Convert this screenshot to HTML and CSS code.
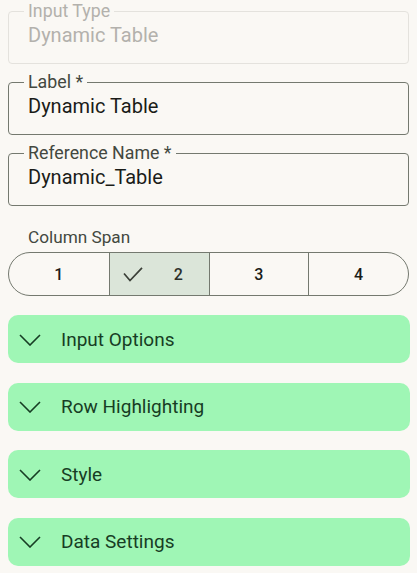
FILE: index.html
```html
<!DOCTYPE html>
<html lang="en">
<head>
<meta charset="utf-8">
<title>Dynamic Table</title>
<link rel="stylesheet" href="styles.css">
</head>
<body>
<div class="page">
  <fieldset class="field field-disabled">
    <legend class="field-label">Input Type</legend>
    <div class="field-value">Dynamic Table</div>
  </fieldset>
  <fieldset class="field">
    <legend class="field-label">Label *</legend>
    <div class="field-value">Dynamic Table</div>
  </fieldset>
  <fieldset class="field">
    <legend class="field-label">Reference Name *</legend>
    <div class="field-value">Dynamic_Table</div>
  </fieldset>

  <div class="span-label">Column Span</div>
  <div class="segmented">
    <div class="segment">1</div>
    <div class="segment segment-selected">
      <svg class="check" width="20" height="16" viewBox="0 0 20 16"><polyline points="1,6.5 7,13.5 19,0.8" fill="none" stroke="#3c4039" stroke-width="1.7"/></svg>
      <span>2</span>
    </div>
    <div class="segment">3</div>
    <div class="segment">4</div>
  </div>

  <div class="panels">
    <div class="panel">
      <svg class="chev" width="22" height="12" viewBox="0 0 22 12"><polyline points="1,1 11,11 21,1" fill="none" stroke="#173d24" stroke-width="1.6"/></svg>
      <span>Input Options</span>
    </div>
    <div class="panel">
      <svg class="chev" width="22" height="12" viewBox="0 0 22 12"><polyline points="1,1 11,11 21,1" fill="none" stroke="#173d24" stroke-width="1.6"/></svg>
      <span>Row Highlighting</span>
    </div>
    <div class="panel">
      <svg class="chev" width="22" height="12" viewBox="0 0 22 12"><polyline points="1,1 11,11 21,1" fill="none" stroke="#173d24" stroke-width="1.6"/></svg>
      <span>Style</span>
    </div>
    <div class="panel">
      <svg class="chev" width="22" height="12" viewBox="0 0 22 12"><polyline points="1,1 11,11 21,1" fill="none" stroke="#173d24" stroke-width="1.6"/></svg>
      <span>Data Settings</span>
    </div>
  </div>
</div>
</body>
</html>
```

FILE: styles.css
```css
html, body {
  margin: 0;
  padding: 0;
  background: #faf8f4;
}

body {
  font-family: Roboto, "Noto Sans", sans-serif;
  color: #1a1c18;
}

.page {
  width: 417px;
  height: 573px;
  box-sizing: border-box;
  padding: 0 8px;
  overflow: hidden;
}

.field {
  margin: 0 0 7px 0;
  border: 1px solid #74796f;
  border-radius: 4px;
  padding: 0 15px 15px 15px;
  min-width: 0;
}

.field-label {
  padding: 0 4px;
  font-size: 17.8px;
  line-height: 22px;
  color: #43483f;
}

.field-value {
  padding: 0 4px;
  font-size: 20px;
  line-height: 26px;
  color: #1a1c18;
}

.field-disabled {
  border-color: #e4e2dd;
}

.field-disabled .field-label,
.field-disabled .field-value {
  color: #b3b1ac;
}

.span-label {
  margin-top: 21px;
  padding-left: 20px;
  font-size: 17.2px;
  line-height: 20px;
  color: #43483f;
}

.segmented {
  margin-top: 5px;
  display: grid;
  grid-template-columns: repeat(4, 1fr);
  height: 44px;
  box-sizing: border-box;
  border: 1px solid #74796f;
  border-radius: 22px;
  overflow: hidden;
}

.segment {
  display: flex;
  align-items: center;
  justify-content: center;
  font-size: 16px;
  font-weight: 500;
  color: #1a1c18;
  border-left: 1px solid #74796f;
}

.segment:first-child {
  border-left: none;
}

.segment-selected {
  background: #dbe5d9;
  justify-content: flex-start;
  padding-left: 13px;
  color: #2c2f2a;
}

.check {
  margin-right: 31px;
  margin-top: 2px;
}

.panels {
  margin-top: 19px;
  display: flex;
  flex-direction: column;
  gap: 19.5px;
  margin-right: -1px;
}

.panel {
  height: 48px;
  border-radius: 10px;
  background: #9ff6b5;
  display: flex;
  align-items: center;
  padding-left: 11px;
  font-size: 19px;
  color: #173d24;
}

.chev {
  margin-right: 20px;
  margin-top: 1px;
}
```
